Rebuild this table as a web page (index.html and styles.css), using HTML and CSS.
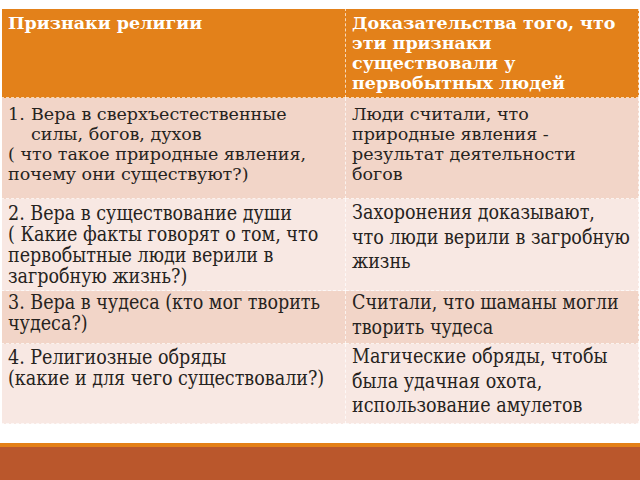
FILE: index.html
```html
<!DOCTYPE html>
<html lang="ru">
<head>
<meta charset="utf-8">
<link rel="stylesheet" href="styles.css">
</head>
<body>
<div class="slide">
  <table class="grid">
    <colgroup><col class="c1"><col class="c2"></colgroup>
    <tr class="head">
      <th>Признаки религии</th>
      <th>Доказательства того, что<br>эти признаки<br>существовали у<br>первобытных людей</th>
    </tr>
    <tr class="r1 dark">
      <td>
        <div class="item"><span class="num">1.</span><span>Вера в сверхъестественные<br>силы, богов, духов</span></div>
        <div>( что такое природные явления,<br>почему они существуют?)</div>
      </td>
      <td>Люди считали, что<br>природные явления -<br>результат деятельности<br>богов</td>
    </tr>
    <tr class="r2 light cond">
      <td>2. Вера в существование души<br>( Какие факты говорят о том, что<br>первобытные люди верили в<br>загробную жизнь?)</td>
      <td class="wide">Захоронения доказывают,<br>что люди верили в загробную<br>жизнь</td>
    </tr>
    <tr class="r3 dark cond">
      <td>3. Вера в чудеса (кто мог творить<br>чудеса?)</td>
      <td class="wide">Считали, что шаманы могли<br>творить чудеса</td>
    </tr>
    <tr class="r4 light cond">
      <td>4. Религиозные обряды<br>(какие и для чего существовали?)</td>
      <td class="wide">Магические обряды, чтобы<br>была удачная охота,<br>использование амулетов</td>
    </tr>
  </table>
  <div class="footer"></div>
</div>
</body>
</html>
```

FILE: styles.css
```css
html, body {
  margin: 0;
  padding: 0;
  background: #ffffff;
}
.slide {
  width: 640px;
  height: 480px;
  position: relative;
  overflow: hidden;
  padding-top: 8px;
  box-sizing: border-box;
}
.grid {
  margin-left: 1px;
  width: 637px;
  border-collapse: collapse;
  table-layout: fixed;
  font-family: "DejaVu Serif", serif;
  color: #262320;
}
.c1 { width: 344px; }
.c2 { width: 293px; }
.grid th, .grid td {
  text-align: left;
  vertical-align: top;
  padding: 4px 4px 0 6px;
  white-space: nowrap;
  border: 1px dashed rgba(255, 255, 255, 0.7);
}
.head { height: 89px; }
.head th {
  background: #e3811a;
  color: #ffffff;
  font-weight: bold;
  font-size: 17.5px;
  line-height: 20px;
  padding-top: 4px;
}
.dark td { background: #f2d5c8; }
.light td { background: #f8e8e3; }
.r1 { height: 101px; }
.r1 td {
  font-size: 17.5px;
  line-height: 20px;
  padding-top: 6px;
}
.item { display: flex; }
.num { width: 23px; flex: none; }
.cond td {
  font-family: "DejaVu Serif Condensed", "DejaVu Serif", serif;
  font-stretch: condensed;
  font-size: 19.5px;
  line-height: 21px;
}
.cond td.wide { line-height: 24.5px; }
.r2 { height: 92px; }
.r2 td { padding-top: 4px; }
.r2 td.wide { padding-top: 2px; }
.r3 { height: 53px; }
.r3 td { padding-top: 1px; }
.r3 td.wide { padding-top: 0; }
.r4 { height: 80px; }
.r4 td { padding-top: 3px; }
.r4 td.wide { padding-top: 1px; }
.footer {
  position: absolute;
  left: 0;
  right: 0;
  bottom: 0;
  height: 33px;
  background: #ba572c;
  border-top: 4px solid #e48017;
}
```
